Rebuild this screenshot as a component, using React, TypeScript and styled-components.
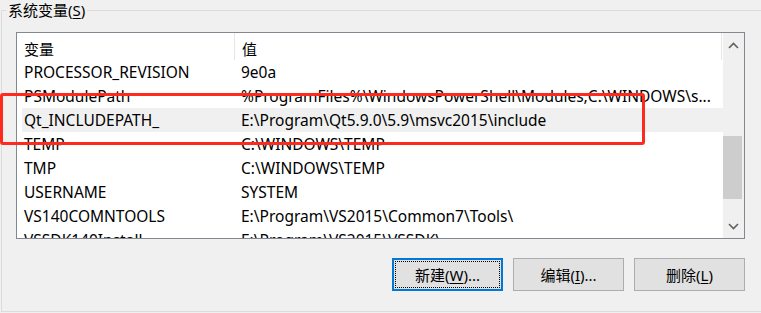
import React from 'react';
import styled, { createGlobalStyle } from 'styled-components';

const GlobalStyle = createGlobalStyle`
    html, body {
        margin: 0;
        padding: 0;
        background: #f0f0f0;
        overflow: hidden;
    }
    body {
        font-family: 'Noto Sans', 'Noto Sans CJK SC', sans-serif;
        font-size: 15px;
        color: #000;
    }
`;

const rows = [
    { name: 'PROCESSOR_REVISION', value: '9e0a' },
    {
        name: 'PSModulePath',
        value: '%ProgramFiles%\\WindowsPowerShell\\Modules;C:\\WINDOWS\\s...',
    },
    { name: 'Qt_INCLUDEPATH_', value: 'E:\\Program\\Qt5.9.0\\5.9\\msvc2015\\include', selected: true },
    { name: 'TEMP', value: 'C:\\WINDOWS\\TEMP' },
    { name: 'TMP', value: 'C:\\WINDOWS\\TEMP' },
    { name: 'USERNAME', value: 'SYSTEM' },
    { name: 'VS140COMNTOOLS', value: 'E:\\Program\\VS2015\\Common7\\Tools\\' },
    { name: 'VSSDK140Install', value: 'E:\\Program\\VS2015\\VSSDK\\' },
];

export default function App() {
    return (
        <Page>
            <GlobalStyle />
            <GroupBox>
                <Legend>
                    系统变量(<u>S</u>)
                </Legend>
                <Body>
                    <ListView>
                        <ListContent>
                            <Header>
                                <HeaderCell $width={218}>变量</HeaderCell>
                                <HeaderCell $width={487}>值</HeaderCell>
                            </Header>
                            {rows.map((r) => (
                                <Row key={r.name} $selected={!!r.selected}>
                                    <NameCell>{r.name}</NameCell>
                                    <ValueCell>{r.value}</ValueCell>
                                </Row>
                            ))}
                        </ListContent>
                        <ScrollBar>
                            <ArrowButton>
                                <svg width="11" height="7" viewBox="0 0 11 7">
                                    <path d="M1 6 L5.5 1.5 L10 6" fill="none" stroke="#606060" strokeWidth="1.6" />
                                </svg>
                            </ArrowButton>
                            <Track>
                                <Thumb />
                            </Track>
                            <ArrowButton>
                                <svg width="11" height="7" viewBox="0 0 11 7">
                                    <path d="M1 1 L5.5 5.5 L10 1" fill="none" stroke="#606060" strokeWidth="1.6" />
                                </svg>
                            </ArrowButton>
                        </ScrollBar>
                    </ListView>
                    <ButtonRow>
                        <Button $focused>
                            <FocusRect>
                                新建(<u>W</u>)...
                            </FocusRect>
                        </Button>
                        <Button>
                            编辑(<u>I</u>)...
                        </Button>
                        <Button>
                            删除(<u>L</u>)
                        </Button>
                    </ButtonRow>
                </Body>
            </GroupBox>
            <Annotation />
        </Page>
    );
}

const Page = styled.div`
    position: relative;
    width: 761px;
    height: 313px;
    overflow: hidden;
`;

const GroupBox = styled.fieldset`
    margin: 0 0 0 1px;
    padding: 0 40px 0 0;
    width: 745px;
    border: 1px solid #dcdcdc;
    min-width: 0;
`;

const Legend = styled.legend`
    margin-left: 4px;
    padding: 0 2px;
    height: 21px;
    line-height: 21px;
    font-size: 15px;
    u {
        text-decoration-thickness: 1px;
        text-underline-offset: 2px;
    }
`;

const Body = styled.div`
    padding: 11px 0 20px 14px;
    display: flex;
    flex-direction: column;
`;

const ListView = styled.div`
    width: 729px;
    height: 207px;
    box-sizing: border-box;
    border: 1px solid #828790;
    background: #fff;
    display: flex;
    overflow: hidden;
`;

const ListContent = styled.div`
    flex: 1;
    overflow: hidden;
    display: flex;
    flex-direction: column;
`;

const Header = styled.div`
    display: flex;
    height: 27px;
    flex-shrink: 0;
`;

const HeaderCell = styled.div<{ $width: number }>`
    width: ${(p) => p.$width}px;
    box-sizing: border-box;
    padding: 3px 0 0 7px;
    border-right: 1px solid #e5e5e5;
    display: flex;
    align-items: center;
`;

const Row = styled.div<{ $selected: boolean }>`
    display: flex;
    height: 24px;
    flex-shrink: 0;
    margin-left: 5px;
    align-items: center;
    font-size: 15.5px;
    background: ${(p) => (p.$selected ? '#f0f0f0' : 'transparent')};
    white-space: nowrap;
`;

const NameCell = styled.div`
    width: 213px;
    padding-left: 2px;
    box-sizing: border-box;
    overflow: hidden;
`;

const ValueCell = styled.div`
    flex: 1;
    padding-left: 6px;
    overflow: hidden;
`;

const ScrollBar = styled.div`
    width: 21px;
    flex-shrink: 0;
    background: #f0f0f0;
    display: flex;
    flex-direction: column;
`;

const ArrowButton = styled.div`
    height: 24px;
    display: flex;
    align-items: center;
    justify-content: center;
    flex-shrink: 0;
`;

const Track = styled.div`
    flex: 1;
    padding: 79px 2px 0 0;
`;

const Thumb = styled.div`
    height: 63px;
    background: #cdcdcd;
`;

const ButtonRow = styled.div`
    width: 729px;
    margin-top: 19px;
    display: flex;
    justify-content: flex-end;
    gap: 10px;
`;

const Button = styled.div<{ $focused?: boolean }>`
    width: 111px;
    height: 33px;
    box-sizing: border-box;
    background: #e1e1e1;
    border: ${(p) => (p.$focused ? '2px solid #0078d7' : '1px solid #adadad')};
    display: flex;
    align-items: center;
    justify-content: center;
    font-size: 15px;
    padding: ${(p) => (p.$focused ? '1px' : '0')};
    u {
        text-decoration-thickness: 1px;
        text-underline-offset: 2px;
    }
`;

const FocusRect = styled.div`
    width: 100%;
    height: 100%;
    box-sizing: border-box;
    border: 1px dotted #000;
    display: flex;
    align-items: center;
    justify-content: center;
`;

const Annotation = styled.div`
    position: absolute;
    left: 0;
    top: 93px;
    width: 645px;
    height: 52px;
    box-sizing: border-box;
    border: 3px solid #fe2a1d;
    border-radius: 3px;
    pointer-events: none;
`;
